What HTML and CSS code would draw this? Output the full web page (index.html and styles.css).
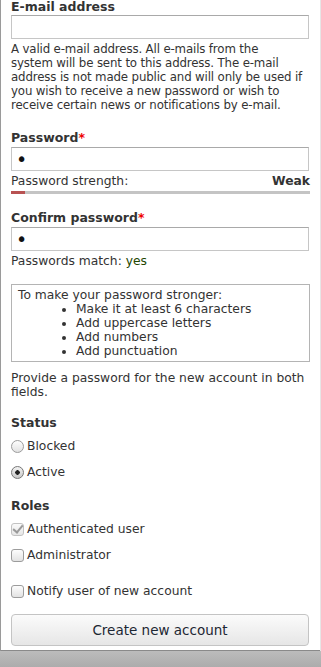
FILE: index.html
```html
<!DOCTYPE html>
<html lang="en">
<head>
  <meta charset="UTF-8" />
  <meta name="viewport" content="width=device-width, initial-scale=1.0" />
  <title>Add user</title>
  <link rel="stylesheet" href="styles.css">
</head>
<body>
  <div class="page">
    <form class="user-form">
      <div class="form-item first">
        <label class="label">E-mail address</label>
        <input class="form-text" type="text">
        <div class="description mail-help">A valid e-mail address. All e-mails from the<br>system will be sent to this address. The e-mail<br>address is not made public and will only be used if<br>you wish to receive a new password or wish to<br>receive certain news or notifications by e-mail.</div>
      </div>

      <div class="form-item pass">
        <label class="label">Password<span class="required">*</span></label>
        <input class="form-text secret" type="password" value="a">
        <div class="strength">
          <div class="strength-title">
            <span>Password strength:</span>
            <span class="strength-text">Weak</span>
          </div>
          <div class="indicator"><div class="indicator-fill"></div></div>
        </div>
      </div>

      <div class="form-item pass-confirm">
        <label class="label">Confirm password<span class="required">*</span></label>
        <input class="form-text secret" type="password" value="a">
        <div class="confirm">Passwords match: <span class="ok">yes</span></div>
      </div>

      <div class="suggestions">
        To make your password stronger:
        <ul>
          <li>Make it at least 6 characters</li>
          <li>Add uppercase letters</li>
          <li>Add numbers</li>
          <li>Add punctuation</li>
        </ul>
      </div>

      <div class="description provide">Provide a password for the new account in both fields.</div>

      <div class="form-item status">
        <div class="label">Status</div>
        <label class="option"><input type="radio" name="status" class="radio"> Blocked</label>
        <label class="option"><input type="radio" name="status" class="radio" checked> Active</label>
      </div>

      <div class="form-item roles">
        <div class="label">Roles</div>
        <label class="option"><input type="checkbox" class="checkbox" checked disabled> Authenticated user</label>
        <label class="option"><input type="checkbox" class="checkbox"> Administrator</label>
      </div>

      <label class="option notify"><input type="checkbox" class="checkbox"> Notify user of new account</label>

      <button type="button" class="form-submit">Create new account</button>
    </form>
  </div>
  <div class="statusbar"></div>
</body>
</html>
```

FILE: styles.css
```css
body {
  margin: 0;
  background-color: #e6e6e6;
  font-family: "DejaVu Sans", Verdana, sans-serif;
  font-size: 12.3px;
  line-height: 14px;
  color: #333;
}

.page {
  width: 319px;
  height: 650px;
  background-color: #fff;
  border-left: 1px solid #9a9a9a;
  border-bottom: 1px solid #8a8a8a;
  overflow: hidden;
}

.user-form {
  padding: 0 10px;
}

.first {
  margin-top: -1px;
}

.first .label {
  margin-bottom: 0;
}

.pass {
  margin-top: 18px;
}

.pass-confirm {
  margin-top: 16px;
}

.label {
  display: block;
  font-weight: bold;
  font-size: 12.5px;
  line-height: 16px;
  margin-bottom: 1px;
}

.required {
  color: #e00;
}

.form-text {
  display: block;
  box-sizing: border-box;
  width: 298px;
  height: 24px;
  margin: 0;
  padding: 0 4px;
  border: 1px solid #c6c6c6;
  border-top-color: #a9a9a9;
  font-size: 12px;
  color: #222;
}

.secret {
  font-family: "DejaVu Sans", sans-serif;
  font-size: 19px;
  color: #111;
}

.description {
  margin-top: 3px;
}

.mail-help {
  font-size: 11.8px;
  letter-spacing: -0.15px;
  white-space: nowrap;
}

.strength {
  margin-top: 3px;
}

.strength-title {
  display: flex;
  justify-content: space-between;
}

.strength-text {
  font-weight: bold;
}

.indicator {
  height: 3px;
  margin-top: 3px;
  background-color: #c4c4c4;
}

.indicator-fill {
  width: 14px;
  height: 100%;
  background-color: #b85252;
}

.confirm {
  margin-top: 3px;
}

.ok {
  color: #234600;
}

.suggestions {
  margin-top: 16px;
  padding: 3px 6px;
  border: 1px solid #b4b4b4;
}

.suggestions ul {
  margin: 0;
  padding-left: 58px;
}

.provide {
  margin-top: 9px;
}

.status {
  margin-top: 16px;
}

.roles {
  margin-top: 13px;
}

.status .label,
.roles .label {
  margin-bottom: 2px;
}

.option {
  display: flex;
  align-items: center;
  gap: 3px;
  height: 26px;
}

.radio,
.checkbox {
  appearance: none;
  margin: 0;
  width: 13px;
  height: 13px;
  border: 1px solid #9c9c9c;
  background: linear-gradient(#fdfdfd, #e2e2e2);
  box-sizing: border-box;
}

.radio {
  border-radius: 50%;
}

.radio:checked {
  background: radial-gradient(circle, #222 0 2px, transparent 2.5px), linear-gradient(#f2f2f2, #c9c9c9);
  border-color: #777;
}

.checkbox {
  border-radius: 3px;
}

.checkbox:checked {
  background: linear-gradient(#fafafa, #e6e6e6);
  border-color: #c2c2c2;
  position: relative;
}

.checkbox:checked::after {
  content: "";
  position: absolute;
  left: 3px;
  top: -1px;
  width: 4px;
  height: 8px;
  border: solid #9a9a9a;
  border-width: 0 2px 2px 0;
  transform: rotate(40deg);
}

.notify {
  margin-top: 10px;
}

.form-submit {
  display: block;
  width: 298px;
  height: 32px;
  margin-top: 10px;
  border: 1px solid #c4c4c4;
  border-radius: 4px;
  background: linear-gradient(#fbfbfb, #e6e6e6);
  font-family: "DejaVu Sans", Verdana, sans-serif;
  font-size: 13.5px;
  color: #1d2733;
}

.statusbar {
  height: 16px;
  background: linear-gradient(#bcbcbc, #acacac);
  border-bottom: 1px solid #555;
}
```
